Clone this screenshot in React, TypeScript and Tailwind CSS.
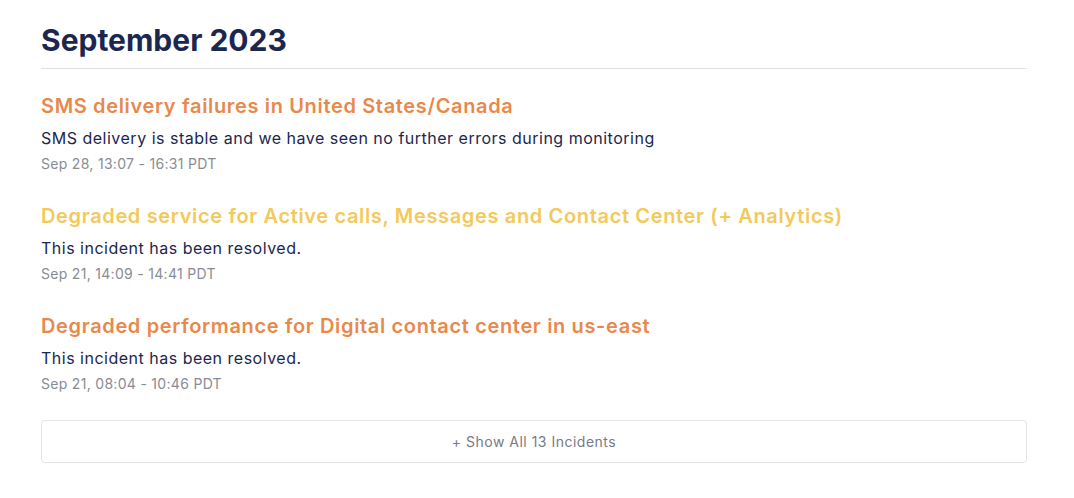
const incidents = [
  {
    title: "SMS delivery failures in United States/Canada",
    color: "text-[#e8894c]",
    body: "SMS delivery is stable and we have seen no further errors during monitoring",
    time: "Sep 28, 13:07 - 16:31 PDT",
  },
  {
    title: "Degraded service for Active calls, Messages and Contact Center (+ Analytics)",
    color: "text-[#f2c95a]",
    body: "This incident has been resolved.",
    time: "Sep 21, 14:09 - 14:41 PDT",
  },
  {
    title: "Degraded performance for Digital contact center in us-east",
    color: "text-[#e8894c]",
    body: "This incident has been resolved.",
    time: "Sep 21, 08:04 - 10:46 PDT",
  },
];

export default function App() {
  return (
    <div className="min-h-[498px] bg-white px-[41px] pt-[19px] font-['Inter','Noto_Sans',sans-serif]">
      <div className="w-[986px]">
        <h2 className="border-b border-[#dfe1e4] pb-[7px] text-[30px] font-bold leading-[42px] text-[#1c2750]">
          September 2023
        </h2>

        <div className="flex flex-col gap-[27px] pt-[22px]">
          {incidents.map((it) => (
            <div key={it.time + it.title} className="flex flex-col">
              <a className={`text-[20px] font-semibold leading-[30px] tracking-[0.65px] ${it.color}`}>{it.title}</a>
              <div className="mt-[5px] text-[16px] leading-[24px] tracking-[0.5px] text-[#1c2750]">{it.body}</div>
              <div className="mt-[4px] text-[14px] leading-[20px] tracking-[0.3px] text-[#888c94]">{it.time}</div>
            </div>
          ))}
        </div>

        <button
          type="button"
          className="mt-[26px] flex h-[43px] w-full items-center justify-center rounded-[4px] border border-[#e4e5e8] bg-white text-[14px] tracking-[0.5px] text-[#777b82]"
        >
          + Show All 13 Incidents
        </button>
      </div>
    </div>
  );
}
